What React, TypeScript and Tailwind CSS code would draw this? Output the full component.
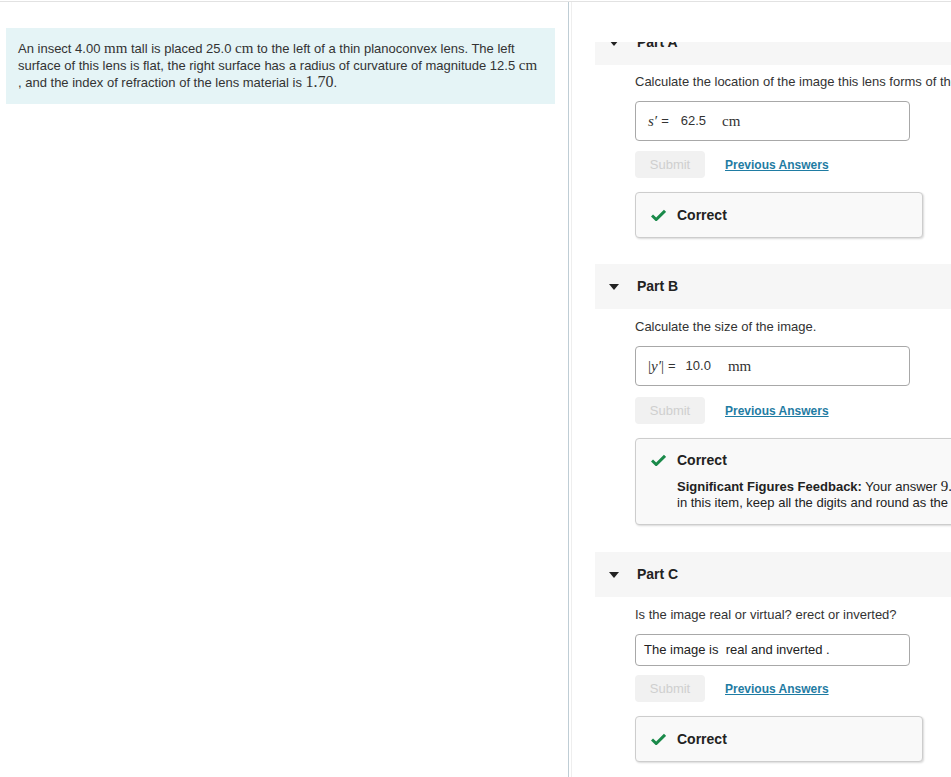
import React from 'react';

const serif = { fontFamily: '"Liberation Serif", "Times New Roman", serif' };

function Caret() {
  return (
    <svg width="10" height="6" viewBox="0 0 10 6" className="shrink-0">
      <path d="M0 0 L10 0 L5 6 Z" fill="#222" />
    </svg>
  );
}

function Check() {
  return (
    <svg width="15" height="12" viewBox="0 0 15 12" className="shrink-0">
      <path d="M1 6.5 L5.2 10.5 L14 1.8" fill="none" stroke="#1a8a4a" strokeWidth="3" strokeLinejoin="miter" />
    </svg>
  );
}

function PartHeader({ label }: { label: string }) {
  return (
    <div className="flex h-[45px] items-center bg-[#f6f6f6] pl-[14px]">
      <Caret />
      <span className="ml-[18px] text-[14px] font-bold text-[#222]">{label}</span>
    </div>
  );
}

function SubmitRow({ mt }: { mt: string }) {
  return (
    <div className={`flex items-center ${mt}`}>
      <div className="flex h-[27px] w-[70px] items-center justify-center rounded-sm bg-[#f1f1f1] text-[13px] text-[#cfcfcf]">Submit</div>
      <a className="ml-[20px] text-[12px] font-bold text-[#1f7ca3] underline">Previous Answers</a>
    </div>
  );
}

function CorrectBox() {
  return (
    <div className="mt-[14px] flex h-[46px] w-[288px] items-center rounded border border-[#cdcdcd] bg-[#f9f9f9] pl-[15px] shadow-[1px_1px_2px_rgba(0,0,0,0.15)]">
      <Check />
      <span className="ml-[11px] text-[14px] font-bold text-[#222]">Correct</span>
    </div>
  );
}

export default function App() {
  return (
    <div className="h-[777px] w-[951px] overflow-hidden bg-white pt-px text-[#333]" style={{ fontFamily: '"Liberation Sans", Arial, sans-serif' }}>
      <div className="flex h-[776px] border-t border-[#e2e2e2]">
        {/* problem statement */}
        <div className="w-[569px] shrink-0 border-r border-[#bfcdd5] pt-[26px]">
          <div className="ml-[6px] w-[549px] whitespace-nowrap bg-[#e5f4f6] px-[12px] pt-[12px] pb-[13px] text-[13px] leading-[16px] text-[#333]">
            An insect 4.00 <span style={serif} className="text-[15px]">mm</span> tall is placed 25.0 <span style={serif} className="text-[15px]">cm</span> to the left of a thin planoconvex lens. The left
            <br />
            surface of this lens is flat, the right surface has a radius of curvature of magnitude 12.5 <span style={serif} className="text-[15px]">cm</span>
            <br />
            , and the index of refraction of the lens material is <span style={serif} className="text-[16px]">1.70</span>.
          </div>
        </div>

        {/* parts */}
        <div className="min-w-0 flex-1 pl-[2px]">
          <div className="h-full border-l border-[#eeeeee] pt-[40px]">
            <div className="h-full overflow-hidden">
              <div className="-mt-[22px] ml-[23px] w-[560px]">
                <PartHeader label="Part A" />
                <div className="pl-[40px]">
                  <p className="mt-[9px] whitespace-nowrap text-[13px] leading-[16px]">Calculate the location of the image this lens forms of the insect.</p>
                  <div className="mt-[11px] flex h-[40px] w-[275px] items-center rounded border border-[#a8a8a8] pl-[12px] text-[13px]">
                    <span style={serif} className="text-[15px] italic">s′</span>
                    <span className="ml-[4px]">=</span>
                    <span className="ml-[12px]">62.5</span>
                    <span style={serif} className="ml-[16px] text-[15px]">cm</span>
                  </div>
                  <SubmitRow mt="mt-[10px]" />
                  <CorrectBox />
                </div>

                <div className="mt-[26px]">
                  <PartHeader label="Part B" />
                </div>
                <div className="pl-[40px]">
                  <p className="mt-[10px] whitespace-nowrap text-[13px] leading-[16px]">Calculate the size of the image.</p>
                  <div className="mt-[11px] flex h-[40px] w-[275px] items-center rounded border border-[#a8a8a8] pl-[12px] text-[13px]">
                    <span style={serif} className="text-[15px]">|<span className="italic">y′</span>|</span>
                    <span className="ml-[4px]">=</span>
                    <span className="ml-[10px]">10.0</span>
                    <span style={serif} className="ml-[17px] text-[15px]">mm</span>
                  </div>
                  <SubmitRow mt="mt-[11px]" />
                  <div className="mt-[14px] h-[87px] w-[480px] overflow-hidden rounded border border-[#cdcdcd] bg-[#f9f9f9] pt-[13px] pl-[15px] shadow-[1px_1px_2px_rgba(0,0,0,0.15)]">
                    <div className="flex h-[16px] items-center">
                      <Check />
                      <span className="ml-[11px] text-[14px] font-bold text-[#222]">Correct</span>
                    </div>
                    <div className="mt-[10px] ml-[26px] whitespace-nowrap text-[13px] leading-[16px] text-[#222]">
                      <b>Significant Figures Feedback:</b> Your answer <span style={serif} className="text-[15px]">9.99 mm</span> was either rounded differently or used a different number of significant figures.
                      <br />
                      in this item, keep all the digits and round as the final step to the requested number of significant figures.
                    </div>
                  </div>
                </div>

                <div className="mt-[27px]">
                  <PartHeader label="Part C" />
                </div>
                <div className="pl-[40px]">
                  <p className="mt-[10px] whitespace-nowrap text-[13px] leading-[16px]">Is the image real or virtual? erect or inverted?</p>
                  <div className="mt-[11px] flex h-[32px] w-[275px] items-center whitespace-pre rounded border border-[#a8a8a8] pl-[8px] text-[13px] text-[#222]">
                    The image is  real and inverted .
                  </div>
                  <SubmitRow mt="mt-[9px]" />
                  <CorrectBox />
                </div>
              </div>
            </div>
          </div>
        </div>
      </div>
    </div>
  );
}
